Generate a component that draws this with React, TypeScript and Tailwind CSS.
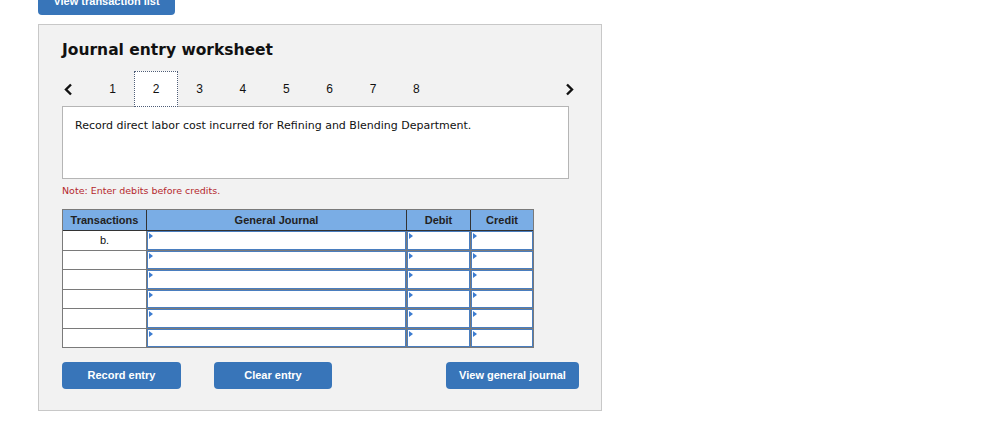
import React from "react";

const verdana = "font-['DejaVu_Sans',Verdana,Tahoma,sans-serif]";
const arial = "font-['Liberation_Sans',Arial,sans-serif]";

const rows = [
  { label: "b.", h: "h-[20px] border-b" },
  { label: "", h: "h-[19px] border-b" },
  { label: "", h: "h-[20px] border-b" },
  { label: "", h: "h-[19px] border-b" },
  { label: "", h: "h-[20px] border-b" },
  { label: "", h: "h-[18px]" },
];

function Marker() {
  return (
    <svg className="absolute left-px top-px" width="4" height="6" viewBox="0 0 4 6">
      <polygon points="0,0 4,3 0,6" fill="#3b7bd0" />
    </svg>
  );
}

function InputCell({ width, last }: { width: string; last?: boolean }) {
  return (
    <div className={`${width} h-full ${last ? "" : "border-r border-[#7a7a7a]"}`}>
      <div className="relative h-full w-full bg-white border border-[#4a7ebf]">
        <Marker />
      </div>
    </div>
  );
}

function Chevron({ dir }: { dir: "left" | "right" }) {
  return (
    <svg width="9" height="13" viewBox="0 0 9 13">
      <polyline
        points={dir === "left" ? "7,1.5 2,6.5 7,11.5" : "2,1.5 7,6.5 2,11.5"}
        fill="none"
        stroke="#111"
        strokeWidth="2.4"
      />
    </svg>
  );
}

export default function App() {
  const tabs = [1, 2, 3, 4, 5, 6, 7, 8];

  return (
    <div className="w-[997px] h-[424px] bg-white pl-[38px] overflow-hidden">
      <button
        className={`block -mt-[12px] h-[27px] w-[137px] rounded-sm bg-[#3875b9] text-white text-[11px] font-bold ${arial}`}
      >
        View transaction list
      </button>

      <div className="mt-[9px] w-[564px] h-[387px] border border-[#c8c8c8] bg-[#f2f2f2] pl-[23px] pt-[15px]">
        <h2 className={`${verdana} text-[15.5px] font-bold leading-[20px] text-[#111]`}>
          Journal entry worksheet
        </h2>

        <div className="mt-[11px] flex h-[36px] items-center">
          <div className="flex w-[29px] items-center pl-[2px]">
            <Chevron dir="left" />
          </div>
          {tabs.map((t) => (
            <div
              key={t}
              className={`relative z-10 flex h-[36px] w-[43.4px] items-center justify-center text-[12px] text-[#111] ${arial} ${
                t === 2 ? "border border-dotted border-[#4e5d77] bg-white" : ""
              }`}
            >
              {t}
            </div>
          ))}
          <div className="ml-auto mr-[27px] flex items-center">
            <Chevron dir="right" />
          </div>
        </div>

        <div className="-mt-px h-[73px] w-[507px] border border-[#b5b5b5] bg-white px-[12px] pt-[12px]">
          <p className={`${verdana} text-[11px] leading-[14px] text-[#111]`}>
            Record direct labor cost incurred for Refining and Blending Department.
          </p>
        </div>

        <p className={`mt-[6px] ${verdana} text-[9.5px] leading-[12px] text-[#b5282e]`}>
          Note: Enter debits before credits.
        </p>

        <div className={`mt-[12px] w-[472px] border border-[#7a7a7a] ${arial}`}>
          <div className="flex h-[21px] border-b border-[#333] bg-[#7aade5] text-[11px] font-bold text-[#222]">
            <div className="flex w-[84px] items-center justify-center border-r border-[#333]">Transactions</div>
            <div className="flex w-[260px] items-center justify-center border-r border-[#333]">General Journal</div>
            <div className="flex w-[64px] items-center justify-center border-r border-[#333]">Debit</div>
            <div className="flex w-[62px] items-center justify-center">Credit</div>
          </div>
          {rows.map((r, i) => (
            <div key={i} className={`flex ${r.h} border-[#7a7a7a]`}>
              <div className="flex w-[84px] items-center justify-center border-r border-[#7a7a7a] bg-white text-[11px] text-[#111]">
                {r.label}
              </div>
              <InputCell width="w-[260px]" />
              <InputCell width="w-[64px]" />
              <InputCell width="w-[62px]" last />
            </div>
          ))}
        </div>

        <div className={`mt-[14px] flex ${arial} text-[11px] font-bold text-white`}>
          <button className="h-[27px] w-[119px] rounded-sm bg-[#3875b9]">Record entry</button>
          <button className="ml-[33px] h-[27px] w-[118px] rounded-sm bg-[#3875b9]">Clear entry</button>
          <button className="ml-[114px] h-[27px] w-[133px] rounded-sm bg-[#3875b9]">View general journal</button>
        </div>
      </div>
    </div>
  );
}
